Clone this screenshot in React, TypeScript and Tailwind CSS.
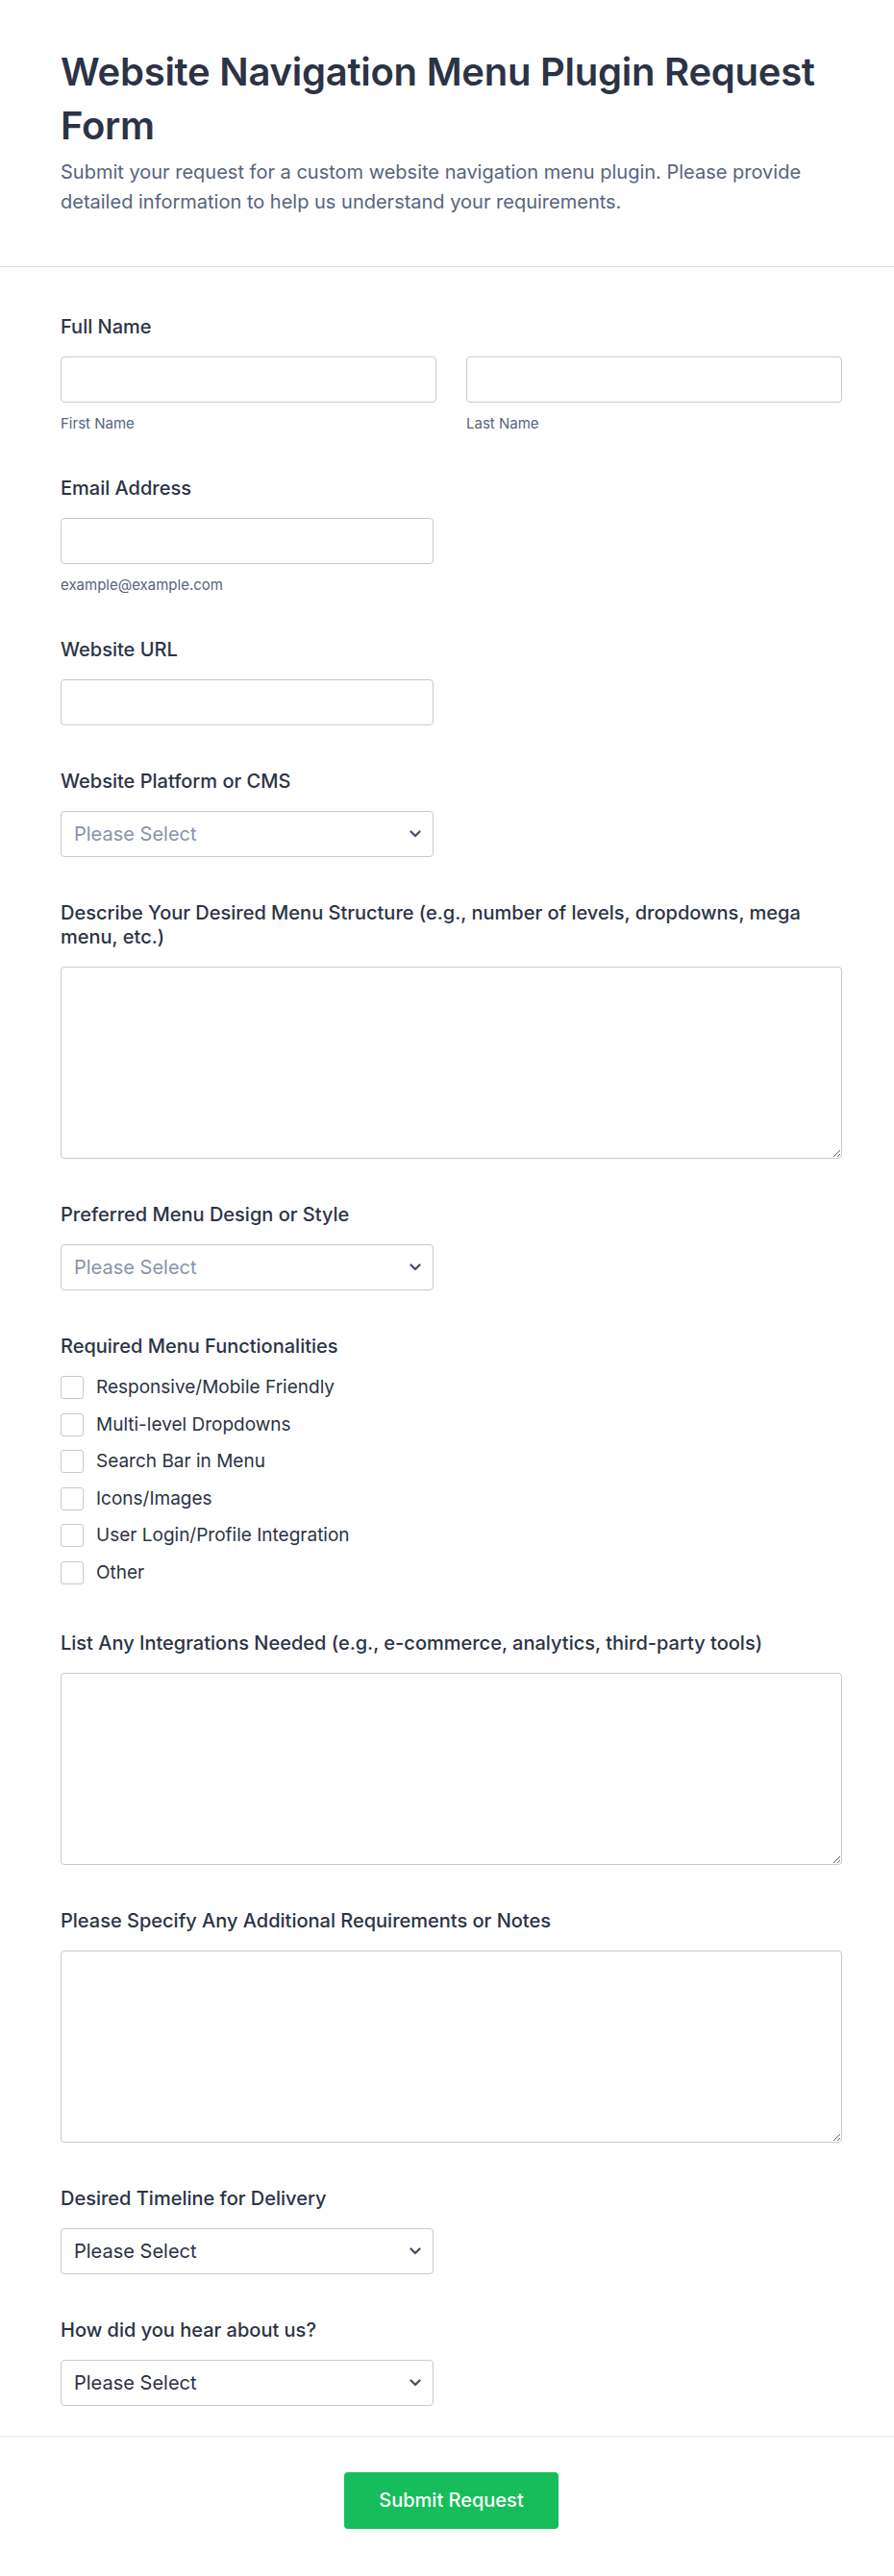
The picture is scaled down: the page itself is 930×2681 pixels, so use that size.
import type { ReactNode } from "react";

const FEATURES = [
  "Responsive/Mobile Friendly",
  "Multi-level Dropdowns",
  "Search Bar in Menu",
  "Icons/Images",
  "User Login/Profile Integration",
  "Other",
];

function FieldLabel({ children }: { children: ReactNode }) {
  return (
    <label className="mb-[18px] block text-[20px] font-medium leading-[25px] text-[#2c3345]">
      {children}
    </label>
  );
}

function SubLabel({ children }: { children: ReactNode }) {
  return <span className="mt-[13px] block text-[15px] leading-[18px] text-[#57647e]">{children}</span>;
}

function TextInput({ className = "" }: { className?: string }) {
  return (
    <input
      type="text"
      className={`block h-[48px] rounded-[4px] border border-[#c3cad8] bg-white px-[13px] text-[20px] text-[#2c3345] outline-none ${className}`}
    />
  );
}

function SelectBox({ muted }: { muted?: boolean }) {
  return (
    <div className="relative w-[388px]">
      <select
        defaultValue=""
        className={`block h-[48px] w-full appearance-none rounded-[4px] border border-[#c3cad8] bg-white pl-[13px] pr-[36px] text-[20px] outline-none ${
          muted ? "text-[#8894ab]" : "text-[#2c3345]"
        }`}
      >
        <option value="">Please Select</option>
      </select>
      <svg
        className="pointer-events-none absolute right-[13px] top-1/2 -translate-y-1/2"
        width="12"
        height="8"
        viewBox="0 0 12 8"
        fill="none"
      >
        <path d="M1.5 1.5L6 6l4.5-4.5" stroke="#4a5369" strokeWidth="2.4" strokeLinecap="round" strokeLinejoin="round" />
      </svg>
    </div>
  );
}

function TextArea() {
  return (
    <textarea className="block h-[200px] w-full rounded-[4px] border border-[#c3cad8] bg-white p-[13px] text-[20px] text-[#2c3345] outline-none" />
  );
}

export default function App() {
  return (
    <div className="min-h-screen bg-white font-['Inter',sans-serif] text-[#2c3345]">
      <header className="border-b border-[#d6d9e0] pb-[51px] pl-[63px] pr-[54px] pt-[47px]">
        <h1 className="text-[40px] font-semibold leading-[56px] tracking-[-0.25px] text-[#2c3345]">
          Website Navigation Menu Plugin Request Form
        </h1>
        <p className="mt-[5px] text-[20px] leading-[31px] text-[#57647e]">
          Submit your request for a custom website navigation menu plugin. Please provide detailed information to help
          us understand your requirements.
        </p>
      </header>

      <form className="flex flex-col gap-[46px] pb-[31px] pl-[63px] pr-[54px] pt-[50px]">
        <div>
          <FieldLabel>Full Name</FieldLabel>
          <div className="grid grid-cols-2 gap-x-[31px]">
            <div>
              <TextInput className="w-full" />
              <SubLabel>First Name</SubLabel>
            </div>
            <div>
              <TextInput className="w-full" />
              <SubLabel>Last Name</SubLabel>
            </div>
          </div>
        </div>

        <div>
          <FieldLabel>Email Address</FieldLabel>
          <TextInput className="w-[388px]" />
          <SubLabel>example@example.com</SubLabel>
        </div>

        <div>
          <FieldLabel>Website URL</FieldLabel>
          <TextInput className="w-[388px]" />
        </div>

        <div>
          <FieldLabel>Website Platform or CMS</FieldLabel>
          <SelectBox muted />
        </div>

        <div>
          <FieldLabel>
            Describe Your Desired Menu Structure (e.g., number of levels, dropdowns, mega menu, etc.)
          </FieldLabel>
          <TextArea />
        </div>

        <div>
          <FieldLabel>Preferred Menu Design or Style</FieldLabel>
          <SelectBox muted />
        </div>

        <div>
          <FieldLabel>Required Menu Functionalities</FieldLabel>
          <div className="mb-[3px] flex flex-col gap-[14.5px]">
            {FEATURES.map((item) => (
              <label key={item} className="flex h-[24px] items-center gap-[13px]">
                <span className="block h-[24px] w-[24px] shrink-0 rounded-[3px] border border-[#c3cad8] bg-white" />
                <span className="text-[19px] leading-[24px] text-[#2c3345]">{item}</span>
              </label>
            ))}
          </div>
        </div>

        <div>
          <FieldLabel>List Any Integrations Needed (e.g., e-commerce, analytics, third-party tools)</FieldLabel>
          <TextArea />
        </div>

        <div>
          <FieldLabel>Please Specify Any Additional Requirements or Notes</FieldLabel>
          <TextArea />
        </div>

        <div>
          <FieldLabel>Desired Timeline for Delivery</FieldLabel>
          <SelectBox />
        </div>

        <div>
          <FieldLabel>How did you hear about us?</FieldLabel>
          <SelectBox />
        </div>
      </form>

      <div className="flex justify-center border-t border-[#e6e9ef] pb-[50px] pl-[63px] pr-[54px] pt-[37px]">
        <button
          type="button"
          className="h-[59px] w-[223px] rounded-[4px] bg-[#18bd5b] text-[20px] font-medium text-white"
        >
          Submit Request
        </button>
      </div>
    </div>
  );
}
